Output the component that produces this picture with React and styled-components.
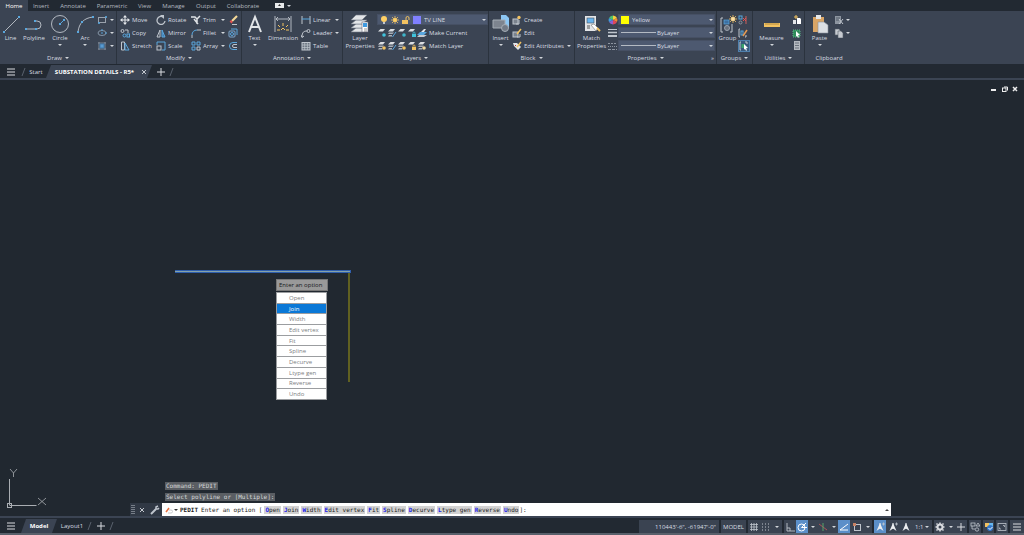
import styled, { createGlobalStyle, css } from "styled-components";

const GlobalStyle = createGlobalStyle`
  * {
    box-sizing: border-box;
  }
  body {
    margin: 0;
    background: #212830;
    font-family: "Open Sans", "Noto Sans", sans-serif;
    font-size: 6px;
    line-height: 8px;
    color: #d9dde2;
  }
  button, select, input {
    font: inherit;
    color: inherit;
    border: 0;
    padding: 0;
    margin: 0;
    background: none;
  }
  ul {
    list-style: none;
    margin: 0;
    padding: 0;
  }
`;

const Page = styled.div`
  height: 100vh;
  display: flex;
  flex-direction: column;
  overflow: hidden;
`;

/* ---------- menu ---------- */

const MenuBar = styled.nav`
  display: flex;
  height: 11px;
  background: #222932;
`;

const MenuTab = styled.button`
  flex: none;
  height: 11px;
  width: ${(p) => p.$w}px;
  color: #b4b9c0;
  white-space: nowrap;
  ${(p) =>
    p.$active &&
    css`
      background: #3b4453;
      color: #fff;
    `}
`;

const MenuExtra = styled.button`
  display: flex;
  align-items: center;
  gap: 3px;
  margin-left: 11px;
`;

/* ---------- ribbon ---------- */

const Ribbon = styled.div`
  display: flex;
  height: 53px;
  flex: none;
  background: #3b4453;
`;

const PanelBox = styled.section`
  flex: none;
  display: flex;
  flex-direction: column;
  border-right: ${(p) => (p.$last ? "0" : "1px solid #2b333e")};
`;

const PanelBody = styled.div`
  display: flex;
  height: 41px;
  padding-top: 2px;
`;

const PanelTitle = styled.button`
  display: flex;
  align-items: center;
  justify-content: center;
  gap: 3px;
  height: 11px;
  position: relative;
`;

const Launcher = styled.span`
  position: absolute;
  right: 2px;
`;

const Big = styled.button`
  width: ${(p) => p.$w}px;
  display: flex;
  flex-direction: column;
  align-items: center;
  white-space: nowrap;
`;

const BigIcon = styled.span`
  height: 21px;
  display: flex;
  align-items: center;
  justify-content: center;
`;

const BigCaret = styled.span`
  height: 5px;
  display: flex;
  align-items: center;
`;

const Col = styled.div`
  width: ${(p) => p.$w}px;
  margin-left: ${(p) => p.$gap || 0}px;
  display: flex;
  flex-direction: column;
`;

const Row = styled.div`
  display: flex;
  align-items: center;
  height: 13px;
`;

const Small = styled.button`
  display: flex;
  align-items: center;
  gap: 2px;
  width: 100%;
  height: 13px;
  text-align: left;
  white-space: nowrap;
`;

const SmallIcon = styled.span`
  flex: none;
  width: 10px;
  height: 11px;
  display: flex;
  align-items: center;
  justify-content: center;
  ${(p) =>
    p.$on &&
    css`
      width: 12px;
      height: 12px;
      background: #3a5a7c;
      border: 1px solid #4f80ad;
    `}
`;

const SmallCaret = styled.span`
  margin-left: auto;
  display: flex;
`;

const LayerTool = styled.button`
  width: 13px;
  height: 13px;
  display: flex;
  align-items: center;
  justify-content: center;
`;

const Combo = styled.label`
  display: flex;
  align-items: center;
  gap: 3px;
  flex: 1;
  height: 11px;
  padding: 0 1px 0 2px;
  background: #4d5970;
  border: 1px solid #465064;
`;

const Select = styled.select`
  appearance: none;
  flex: 1;
  min-width: 0;
  outline: 0;
`;

const Swatch = styled.span`
  width: 8px;
  height: 8px;
  background: ${(p) => p.$color};
`;

const LineSample = styled.span`
  width: 35px;
  height: 1px;
  background: #b4bac3;
  margin-right: -2px;
`;

const Caret = styled.i`
  width: 0;
  height: 0;
  border: 2px solid transparent;
  border-top-color: ${(p) => p.$color || "#d3d7dc"};
  border-bottom: 0;
`;

/* ---------- file and layout tabs ---------- */

const TabStrip = styled.div`
  flex: none;
  display: flex;
  align-items: center;
  height: 14px;
  background: #222932;
`;

const FileTabs = styled(TabStrip)`
  height: 16px;
  padding-top: 1px;
  border-bottom: 2px solid #3b4453;
`;

const Tab = styled.button`
  height: 100%;
  display: flex;
  align-items: center;
  justify-content: center;
  gap: 7px;
  white-space: nowrap;
  width: ${(p) => p.$w}px;
  ${(p) =>
    p.$active &&
    css`
      background: #3b4453;
      color: #fff;
      font-weight: 700;
      clip-path: polygon(5px 0, 100% 0, calc(100% - 5px) 100%, 0 100%);
    `}
`;

const FileTab = styled(Tab)`
  padding-left: 4px;
`;

const IconButton = styled.button`
  display: flex;
  align-items: center;
  justify-content: center;
  height: 13px;
  width: ${(p) => p.$w || 13}px;
  background: ${(p) => (p.$on ? "#5b8fc9" : "none")};
`;

/* ---------- drawing area ---------- */

const Canvas = styled.main`
  flex: 1;
  min-height: 0;
  position: relative;
  display: flex;
  flex-direction: column;
  background: #212830;
`;

const WindowButtons = styled.div`
  display: flex;
  justify-content: flex-end;
  padding: 2px 4px 0 0;
`;

const Drawing = styled.svg`
  position: absolute;
  left: 174px;
  top: 189px;
`;

const Ucs = styled.svg`
  position: absolute;
  left: 5px;
  bottom: 6px;
`;

const Popup = styled.div`
  position: absolute;
  left: 276px;
  top: 199px;
`;

const PopupTitle = styled.div`
  width: 52px;
  height: 12px;
  padding: 1px 2px;
  background: #999;
  border: 1px solid #777;
  color: #16181c;
  white-space: nowrap;
`;

const PopupList = styled.ul`
  display: grid;
  grid-auto-rows: 1fr;
  gap: 1px;
  width: 51px;
  height: 108px;
  margin-top: 1px;
  padding: 1px;
  background: #9b9da0;
`;

const Option = styled.button`
  display: block;
  width: 100%;
  height: 100%;
  padding-left: 12px;
  text-align: left;
  background: ${(p) => (p.$active ? "#0a78d7" : "#fff")};
  color: ${(p) => (p.$active ? "#fff" : "#7c7e82")};
`;

const Console = styled.div`
  margin: auto 133px 0 130px;
  font-family: "DejaVu Sans Mono", "Liberation Mono", monospace;
`;

const History = styled.div`
  display: flex;
  flex-direction: column;
  align-items: flex-start;
  gap: 3px;
  padding: 0 0 2px 35px;

  span {
    background: #5a5e63;
    color: #d5d7d9;
    padding: 0 1px;
  }
`;

const CommandRow = styled.div`
  display: flex;
  align-items: center;
  height: 13px;
  background: #303844;
`;

const CommandLine = styled.div`
  flex: 1;
  display: flex;
  align-items: center;
  height: 13px;
  padding: 0 2px;
  background: #fff;
  color: #222;
  white-space: pre;

  b {
    margin: 0 3px 0 2px;
  }
  input {
    flex: 1;
    min-width: 0;
    outline: 0;
  }
`;

const Keywords = styled.span`
  display: flex;
  gap: 2px;
  margin-left: 2px;
`;

const Keyword = styled.button`
  background: #d2d2d2;
  padding: 0 1px;
  &::first-letter {
    color: #2222ee;
    font-weight: 700;
  }
`;

/* ---------- status bar ---------- */

const StatusBar = styled.footer`
  flex: none;
  display: flex;
  height: 19px;
  padding-top: 1px;
  background: #222932;
  border-top: 2px solid #3b4453;
  border-bottom: 2px solid #59606b;
`;

const StatusTools = styled.div`
  display: flex;
  gap: 2px;
  margin-left: auto;
  padding-top: 1px;
`;

const StatusGroup = styled.div`
  display: flex;
  align-items: center;
  justify-content: ${(p) => (p.$end ? "flex-end" : "center")};
  height: 13px;
  width: ${(p) => (p.$w ? p.$w + "px" : "auto")};
  padding: ${(p) => (p.$end ? "0 3px" : "0")};
  background: #3a4351;
  white-space: nowrap;
`;

/* ---------- icons ---------- */

const W = "#bfc5cd";
const B = "#5aa7de";
const Y = "#f2c261";

function Svg({ s = 10, h, children, ...rest }) {
  return (
    <svg width={s} height={h || s} viewBox={`0 0 ${s} ${h || s}`} fill="none" stroke={W} {...rest}>
      {children}
    </svg>
  );
}

function Dots({ at, r = 1 }) {
  return at.map(([x, y]) => (
    <rect key={x + "-" + y} x={x - r} y={y - r} width={r * 2} height={r * 2} fill={B} stroke="none" />
  ));
}

const LineIcon = () => (
  <Svg s={20}><path d="M3 18 18 3" strokeWidth=".9" /><Dots at={[[3, 18], [18, 3]]} /></Svg>
);
const PolylineIcon = () => (
  <Svg s={20}><path d="M2 15h11a4 4 0 0 0 0-8h-2" strokeWidth=".9" /><Dots at={[[2, 15], [12, 15], [11, 7]]} /></Svg>
);
const CircleIcon = () => (
  <Svg s={20}><circle cx="10" cy="10" r="8.500" strokeWidth=".9" /><path d="m10 10 4-4" stroke={B} /><Dots at={[[10, 10], [14, 6]]} /></Svg>
);
const ArcIcon = () => (
  <Svg s={20}><path d="M3 18C4 9 9 4 18 3" strokeWidth=".9" /><Dots at={[[3, 18], [7, 8], [18, 3]]} /></Svg>
);
const TextIcon = () => (
  <Svg s={16} h={20}><path d="M2 18 8 3l6 15M4 13h8" stroke="#e2e5e8" strokeWidth="2" /></Svg>
);
const DimensionIcon = () => (
  <Svg s={20}>
    <path d="M2 2v16M18 2v16M3 5h14M5 3 3 5l2 2M15 3l2 2-2 2" strokeWidth=".9" />
    <path d="M10 9v3M5 11l2 2M15 11l-2 2M4 16h3M13 16h3M8 16l2-2 2 2" stroke={Y} />
  </Svg>
);
const LayersIcon = () => (
  <Svg s={20}>
    <g fill="#e3e5e8" stroke="#727a86" strokeWidth=".6">
      <path d="m1 18 5-4h11l-5 4z" /><path d="m1 14 5-4h11l-5 4z" /><path d="m1 10 5-4h11l-5 4z" /><path d="m1 6 5-5h11l-5 5z" />
    </g>
    <rect x="12" y="8" width="6" height="10" fill="#fff" stroke="#667" strokeWidth=".6" />
    <rect x="13" y="9" width="4" height="4" fill="#3f9ae0" stroke="none" />
    <path d="M14 15h3M14 17h3" strokeWidth=".6" stroke="#555" />
  </Svg>
);
const InsertIcon = () => (
  <Svg s={18} h={20}>
    <path d="M9 1h5l3 3v10H9z" fill="#8cc6f3" stroke="none" />
    <path d="M1 6h12v8H1z" fill="#7d848f" stroke="#a5acb5" />
    <circle cx="13" cy="14" r="3.500" fill="#727a86" stroke="#a5acb5" />
  </Svg>
);
const MatchIcon = () => (
  <Svg s={18} h={20}>
    <rect x="2" y="2" width="11" height="15" fill="#e3e5e8" stroke="none" />
    <rect x="4" y="4" width="7" height="5" fill="#69b4ee" stroke="#45505e" strokeWidth=".6" />
    <path d="M4 12h3M4 14h3" stroke="#555" />
    <path d="m8 11 3-1 4 4-2 3z" fill="#fff" stroke="#777" strokeWidth=".6" />
    <path d="m14 14 3 3" stroke={Y} strokeWidth="2" />
  </Svg>
);
const GroupIcon = () => (
  <Svg s={18} h={20}>
    <path d="M4 4H2v14h2M11 18h2V10" />
    <rect x="5" y="6" width="5" height="4" fill="#3d6fa0" stroke={B} strokeWidth=".7" />
    <circle cx="8" cy="14" r="2.500" fill="#69717d" stroke="#9aa2ad" />
    <path d="M14 1v8M10 5h8M11 2l6 6M17 2l-6 6" stroke={Y} strokeWidth=".8" />
    <circle cx="14" cy="5" r="2" fill="#ffe0a0" stroke="none" />
  </Svg>
);
const MeasureIcon = () => (
  <Svg s={18}>
    <rect x="1" y="8" width="16" height="4" fill={Y} stroke="none" />
    <path d="M3 8v2M5 8v2M7 8v2M9 8v2M11 8v2M13 8v2M15 8v2" stroke="#8a6a2d" strokeWidth=".6" />
  </Svg>
);
const PasteIcon = () => (
  <Svg s={18} h={20}>
    <rect x="2" y="3" width="11" height="15" fill="#d9a566" stroke="none" />
    <rect x="5" y="1" width="5" height="4" fill="#e6e8ea" stroke="none" />
    <path d="M7 8h6l4 3v8H7z" fill="#dcdfe3" stroke="#8b929c" strokeWidth=".6" />
  </Svg>
);

const RectIcon = () => <Svg><rect x="1.500" y="2.500" width="7" height="5" stroke="#9aa2ad" /><Dots at={[[2, 8], [9, 2]]} r={0.9} /></Svg>;
const EllipseIcon = () => <Svg><ellipse cx="5" cy="5" rx="4" ry="2.500" stroke="#8494a6" /><Dots at={[[5, 5], [9, 5], [5, 2]]} r={0.7} /></Svg>;
const HatchIcon = () => <Svg><path d="M2 1v8M8 1v8M1 2h8M1 8h8" stroke="#8d97a4" strokeWidth=".8" /><rect x="3" y="3" width="4" height="4" fill="#5a9bd0" stroke="#3f78ab" /></Svg>;
const MoveIcon = () => <Svg stroke="#e3e6ea"><path d="M5 1v8M1 5h8" /><path d="M5 0 3 2.500h4zM5 10 3 7.500h4zM0 5l2.500-2v4zM10 5 7.500 3v4z" fill="#e3e6ea" stroke="none" /></Svg>;
const CopyIcon = () => <Svg><circle cx="2.500" cy="3" r="1.500" /><path d="M5 2h3v3" /><circle cx="4.500" cy="7.500" r="1.500" stroke={B} /><rect x="7" y="6" width="2.500" height="3" stroke={B} /></Svg>;
const StretchIcon = () => <Svg><path d="M1.500 9V1h3v8z" /><path d="M5 2l4 7H5z" stroke={B} /></Svg>;
const RotateIcon = () => <Svg><path d="M7 2a4 4 0 1 0 2 4" strokeWidth="1.300" /><path d="M4 0h4v4z" fill={W} stroke="none" /></Svg>;
const MirrorIcon = () => <Svg><path d="M4 2v7H1z" /><path d="M6 2v7h3z" fill="#3f78ab" stroke={B} /></Svg>;
const ScaleIcon = () => <Svg><path d="M1 4V1h8v8H6" stroke={B} /><rect x="1" y="5" width="4" height="4" /></Svg>;
const TrimIcon = () => <Svg stroke="#dfe2e6"><path d="M0 2h4l2 2 3-3M6 4v5M3 4l4 5" strokeWidth="1.500" /></Svg>;
const FilletIcon = () => <Svg><path d="M1 10V7" /><path d="M1 7c0-3 2-5 5-5" stroke={B} /><path d="M6 2h4" /></Svg>;
const ArrayIcon = () => <Svg><path d="M1 1h3v3H1zM6 1h3v3H6zM1 6h3v3H1z" stroke={B} /><path d="M6 6h3v3H6z" /></Svg>;
const EraseIcon = () => <Svg><path d="m9 1-5 5" stroke="#f5d998" strokeWidth="2.200" /><path d="M4 6 2.500 7.500" stroke="#e8504f" strokeWidth="2.500" /><path d="M4 9.500h5" /></Svg>;
const ExplodeIcon = () => <Svg><rect x="1" y="3" width="6" height="6" rx="1" stroke="#7fa8cf" /><path d="M3 1h6v6" stroke={B} /><circle cx="4" cy="6" r="1.500" stroke={B} /></Svg>;
const OffsetIcon = () => <Svg><path d="M9 1.500H5a3.500 3.500 0 0 0 0 7h4" stroke={B} /><path d="M9 3.500H6a1.500 1.500 0 0 0 0 3h3" /></Svg>;
const LinearIcon = () => <Svg><path d="M1 1v8M9 1v8" /><path d="M1 4h8" stroke={B} /></Svg>;
const LeaderIcon = () => <Svg><path d="M1 9c0-5 2-6 5-6" /><circle cx="7.500" cy="3" r="1.500" /><path d="M0 7l1 2.500L3 8" /></Svg>;
const TableIcon = () => <Svg><rect x="1" y="1.500" width="8" height="7.500" fill="#6c7582" /><path d="M1 4h8M1 6.500h8M3.700 2v7M6.400 2v7" strokeWidth=".7" /></Svg>;
const CreateIcon = () => <Svg><rect x="1" y="4" width="5" height="5" fill="#7b838e" /><path d="M7 5v4H4" /><circle cx="7" cy="2.500" r="1.700" fill={Y} stroke="none" /></Svg>;
const EditIcon = () => <Svg><rect x="1" y="4" width="5" height="5" fill="#7b838e" /><path d="M9 1 5 6" stroke={Y} strokeWidth="1.500" /><path d="M8 6v3H5" /></Svg>;
const AttrIcon = () => <Svg><path d="M1 2h4l4 4-3 3-4-4z" fill="#e3e5e8" stroke="none" /><path d="M9 1 5 6" stroke={Y} strokeWidth="1.500" /><path d="m3 4 1 1" stroke="#b33" /></Svg>;
const WheelIcon = () => (
  <Svg stroke="none">
    <path d="M5 5V.5A4.500 4.500 0 0 1 9 3z" fill="#f2d13c" /><path d="M5 5l4-2a4.500 4.500 0 0 1 0 4z" fill="#f08a33" />
    <path d="M5 5l4 2a4.500 4.500 0 0 1-4 2.500z" fill="#e2465b" /><path d="M5 5v4.500A4.500 4.500 0 0 1 1 7z" fill="#8b5fd0" />
    <path d="M5 5 1 7a4.500 4.500 0 0 1 0-4z" fill="#3f9ae0" /><path d="M5 5 1 3A4.500 4.500 0 0 1 5 .5z" fill="#4fc06b" />
  </Svg>
);
const WeightIcon = () => <Svg><path d="M0 1.500h9" /><path d="M0 4.500h9" strokeWidth="1.500" /><path d="M0 8h9" strokeWidth="2" /></Svg>;
const LtypeIcon = () => <Svg stroke="#8d95a1"><path d="M0 2.500h9" strokeDasharray="2 1" /><path d="M0 5.500h9" strokeDasharray="1 1" /><path d="M0 8.500h9" strokeDasharray="3 1" /></Svg>;
const UngroupIcon = () => <Svg><rect x="1" y="1" width="3" height="3" stroke={B} /><circle cx="2.500" cy="7.500" r="1.500" stroke="#8d95a1" /><path d="M8 1v8" stroke="#c9605c" /><path d="m5 3 3 3M8 3 5 6" stroke="#e8504f" /></Svg>;
const GroupEditIcon = () => <Svg><path d="M2 1H1v8h1M7 9h1V7" /><rect x="3" y="3" width="2" height="4" stroke={B} /><path d="M9 2 5 8" stroke="#e89b52" strokeWidth="1.500" /></Svg>;
const GroupSelectIcon = () => <Svg><path d="M2 1H1v8h1M6 1h2v2" /><rect x="2.500" y="3" width="3" height="4" fill="#3aa36b" stroke="none" /><path d="m5 3 4 4-2 .3 1 2-1 .4-1-2-1 1z" fill="#fff" stroke="none" /></Svg>;
const PointIcon = () => <Svg><path d="M1 5h3v4H1z" fill="#e3e5e8" stroke="none" /><path d="M5 3h3l1 1v5H5z" fill="#fff" stroke="none" /><path d="M4 0v4M2 2h4" stroke={Y} /></Svg>;
const QuickSelectIcon = () => <Svg><rect x="1" y="2" width="7" height="7" fill="#2f8a59" stroke="#5cb98a" strokeDasharray="1 1" /><path d="m4 3 4 4-2 .3 1 2-1 .4-1-2-1 1z" fill="#fff" stroke="none" /></Svg>;
const CalcIcon = () => <Svg><rect x="2" y="0" width="6" height="9" fill="#b4b9c0" stroke="none" /><path d="M3 2h4M3 4.500h4M3 7h4" stroke="#565e6a" strokeWidth=".8" /></Svg>;
const CutIcon = () => <Svg><rect x="1" y="1" width="6" height="8" fill="#8d95a0" stroke="none" /><path d="M2 3h4M2 5h3" stroke="#454e5b" strokeWidth=".8" /><path d="m5 4 4 5M9 4 5 9" /></Svg>;
const CopyClipIcon = () => <Svg fill="#c6cad0" stroke="#565e6a" strokeWidth=".6"><path d="M1 1h4l1 1v5H1z" /><path d="M4 3h3l2 2v5H4z" /></Svg>;

/* small sheet with a coloured badge in its lower right corner */
function LayerMini({ tint, square, n }) {
  return (
    <Svg>
      <path d="m1 3.500 2.500-2.500H8L6 3.500z" fill="#dcdfe3" stroke="none" />
      {n && <path d="m1 6 1-1.500h5L5.500 6zM1 8.500 2 7h3v1.500z" fill="#a9afb8" stroke="none" />}
      {square ? (
        <>
          <rect x="5" y="6" width="4" height="3" fill={tint} stroke="none" />
          <path d="M6 6V5a1 1 0 0 1 2 0v1" stroke={tint} strokeWidth=".8" />
        </>
      ) : (
        <circle cx="7" cy="7" r="1.800" fill={tint} stroke="none" />
      )}
    </Svg>
  );
}

function LayerSwap() {
  return (
    <Svg>
      <path d="m1 3.500 2.500-2.500H8L6 3.500z" fill="#dcdfe3" stroke="none" />
      <path d="m1 6 1-1.500h5L5.500 6zM1 8.500 2 7h3v1.500z" fill="#a9afb8" stroke="none" />
      <path d="M9 4 5.500 9" stroke={B} />
    </Svg>
  );
}

const MakeCurrentIcon = () => <Svg><path d="m0 9 2-2h8L7 9z" fill="#c6cad0" stroke="none" /><path d="m0 7 3-3h7L7 7z" fill={B} stroke="none" /><path d="m4 4 3-3h2L7 4z" fill="#e9ebee" stroke="none" /></Svg>;
const BulbIcon = () => <Svg s={8} h={10}><circle cx="4" cy="4" r="3" fill="#ffd066" stroke="none" /><path d="M3 8h2" strokeWidth="2" /></Svg>;
const SunIcon = () => <Svg s={8} h={10}><path d="M4 1v8M0 5h8M1 2l6 6M7 2 1 8" stroke={Y} strokeWidth=".8" /><circle cx="4" cy="5" r="2" fill="#ffd066" stroke="none" /></Svg>;
const LockIcon = () => <Svg s={8} h={10}><rect x="0" y="5" width="6" height="4" fill={Y} stroke="none" /><path d="M4 5V3a1.500 1.500 0 0 1 3 0v2" stroke={Y} /></Svg>;

const BurgerIcon = () => <Svg><path d="M1 2h8M1 5h8M1 8h8" stroke="#d9dce0" /></Svg>;
const PlusIcon = () => <Svg><path d="M5 1v8M1 5h8" stroke="#d9dce0" /></Svg>;
const CloseIcon = () => <Svg s={6}><path d="m1 1 4 4M5 1 1 5" stroke="#c4c8ce" /></Svg>;
const WrenchIcon = () => <Svg><path d="m1 9 5-5" strokeWidth="2" /><path d="M8 1 6 2v2h2l1-1" strokeWidth="1.500" /></Svg>;
const Slash = () => <Svg s={5} h={10} stroke="#59616d"><path d="M4 1 1 9" /></Svg>;

const GridIcon = () => <Svg><path d="M2.500 1v8M5 1v8M7.500 1v8M1 2.500h8M1 5h8M1 7.500h8" strokeWidth=".8" /></Svg>;
const SnapIcon = () => <Svg><path d="M1 2h8M1 5h8M1 8h8" strokeDasharray="1 2" /></Svg>;
const OrthoIcon = () => <Svg><path d="M2 1v8h8M2 6h3v3" strokeWidth=".9" /></Svg>;
const PolarIcon = () => <Svg stroke="#fff"><circle cx="4.500" cy="5.500" r="3.500" /><path d="M9 1 4.500 5.500H10" /></Svg>;
const IsoIcon = () => <Svg><path d="m1 2 8 6" stroke="#b0555a" /><path d="M5 1v8" stroke="#57a36a" /></Svg>;
const TrackIcon = () => <Svg stroke="#fff"><path d="M9 2 1 8h8" /></Svg>;
const OsnapIcon = () => <Svg><rect x="2.500" y="2.500" width="6" height="6" /><rect x="1" y="1" width="3" height="3" fill="#c98263" stroke="none" /></Svg>;
const AnnoIcon = ({ extra }) => <Svg><path d="M5 1 8.500 9 5 6.500 1.500 9z" fill="#eceef0" stroke="none" /><path d="M5 1v6" stroke="#eceef0" />{extra && <path d="M7 2h3M8.500.5v3" strokeWidth=".8" />}</Svg>;
const GearIcon = () => <Svg stroke="#d9dce0"><circle cx="5" cy="5" r="2.500" strokeWidth="2" /><path d="M5 .5v2M5 7.500v2M.5 5h2M7.500 5h2M1.500 1.500l1 1M7.500 7.500l1 1M8.500 1.500l-1 1M1.500 8.500l1-1" strokeWidth="1.500" /></Svg>;
const IsolateIcon = () => <Svg strokeWidth=".8"><rect x="1" y="1" width="4" height="3" /><path d="m6 4 2-3 2 3z" /><circle cx="7" cy="7.500" r="1.700" /><path d="M2 4v3h3" /></Svg>;
const GpuIcon = () => <Svg><rect x="1" y="1" width="4" height="4" fill={Y} stroke="none" /><rect x="5" y="1" width="4" height="4" fill="#67b7ef" stroke="none" /><circle cx="6" cy="6" r="3" fill="#3478c9" stroke="none" /><path d="m4.500 6 1.500 1.500L8.500 5" stroke="#fff" /></Svg>;
const FullIcon = () => <Svg><rect x="1" y="1.500" width="8" height="7" strokeWidth=".8" /><path d="M6 3.500h1.500V5M4 7H2.500V5.500" strokeWidth=".8" /></Svg>;

/* ---------- parts ---------- */

function Panel({ title, more = true, launcher, last, children }) {
  return (
    <PanelBox $last={last}>
      <PanelBody>{children}</PanelBody>
      <PanelTitle>
        {title}
        {more && <Caret />}
        {launcher && <Launcher>»</Launcher>}
      </PanelTitle>
    </PanelBox>
  );
}

function BigTool({ w, icon, lines, caret }) {
  return (
    <Big $w={w}>
      <BigIcon>{icon}</BigIcon>
      {lines.map((l) => (
        <span key={l}>{l}</span>
      ))}
      {caret && <BigCaret><Caret /></BigCaret>}
    </Big>
  );
}

function Tool({ icon, label, name, caret, on }) {
  return (
    <Small aria-label={label ? undefined : name}>
      <SmallIcon $on={on}>{icon}</SmallIcon>
      {label}
      {caret && <SmallCaret><Caret /></SmallCaret>}
    </Small>
  );
}

const menus = [
  ["Home", 28],
  ["Insert", 26],
  ["Annotate", 38],
  ["Parametric", 40],
  ["View", 25],
  ["Manage", 33],
  ["Output", 32],
  ["Collaborate", 42],
];

const options = ["Open", "Join", "Width", "Edit vertex", "Fit", "Spline", "Decurve", "Ltype gen", "Reverse", "Undo"];

export default function App() {
  return (
    <Page>
      <GlobalStyle />
      <MenuBar>
        {menus.map(([m, w]) => (
          <MenuTab key={m} $w={w} $active={m === "Home"}>{m}</MenuTab>
        ))}
        <MenuExtra aria-label="Ribbon display">
          <Svg s={9} h={5}><rect width="9" height="5" fill="#e8eaec" stroke="none" /><path d="m3 3 1.500-2L6 3z" fill="#333" stroke="none" /></Svg>
          <Caret />
        </MenuExtra>
      </MenuBar>

      <Ribbon>
        <Panel title="Draw">
          <BigTool w={21} icon={<LineIcon />} lines={["Line"]} />
          <BigTool w={26} icon={<PolylineIcon />} lines={["Polyline"]} />
          <BigTool w={26} icon={<CircleIcon />} lines={["Circle"]} caret />
          <BigTool w={24} icon={<ArcIcon />} lines={["Arc"]} caret />
          <Col $w={17}>
            <Tool name="Rectangle" icon={<RectIcon />} caret />
            <Tool name="Ellipse" icon={<EllipseIcon />} caret />
            <Tool name="Hatch" icon={<HatchIcon />} caret />
          </Col>
          <Col $w={2} />
        </Panel>

        <Panel title="Modify">
          <Col $w={33} $gap={3}>
            <Tool label="Move" icon={<MoveIcon />} />
            <Tool label="Copy" icon={<CopyIcon />} />
            <Tool label="Stretch" icon={<StretchIcon />} />
          </Col>
          <Col $w={32} $gap={3}>
            <Tool label="Rotate" icon={<RotateIcon />} />
            <Tool label="Mirror" icon={<MirrorIcon />} />
            <Tool label="Scale" icon={<ScaleIcon />} />
          </Col>
          <Col $w={34} $gap={3}>
            <Tool label="Trim" icon={<TrimIcon />} caret />
            <Tool label="Fillet" icon={<FilletIcon />} caret />
            <Tool label="Array" icon={<ArrayIcon />} caret />
          </Col>
          <Col $w={13} $gap={3}>
            <Tool name="Erase" icon={<EraseIcon />} />
            <Tool name="Explode" icon={<ExplodeIcon />} />
            <Tool name="Offset" icon={<OffsetIcon />} />
          </Col>
        </Panel>

        <Panel title="Annotation">
          <BigTool w={25} icon={<TextIcon />} lines={["Text"]} caret />
          <BigTool w={32} icon={<DimensionIcon />} lines={["Dimension"]} />
          <Col $w={38} $gap={2}>
            <Tool label="Linear" icon={<LinearIcon />} caret />
            <Tool label="Leader" icon={<LeaderIcon />} caret />
            <Tool label="Table" icon={<TableIcon />} />
          </Col>
          <Col $w={3} />
        </Panel>

        <Panel title="Layers">
          <BigTool w={34} icon={<LayersIcon />} lines={["Layer", "Properties"]} />
          <Col $w={111}>
            <Row>
              <Combo>
                <BulbIcon />
                <SunIcon />
                <LockIcon />
                <Swatch $color="#8080ff" />
                <Select aria-label="Layer"><option>TV LINE</option></Select>
                <Caret />
              </Combo>
            </Row>
            <Row>
              <LayerTool aria-label="Off"><LayerMini tint="#41c3dc" /></LayerTool>
              <LayerTool aria-label="Isolate"><LayerSwap /></LayerTool>
              <LayerTool aria-label="Freeze"><LayerMini tint="#3fb5c9" /></LayerTool>
              <LayerTool aria-label="Lock"><LayerMini tint="#41c3dc" square /></LayerTool>
              <Tool label="Make Current" icon={<MakeCurrentIcon />} />
            </Row>
            <Row>
              <LayerTool aria-label="Turn all on"><LayerMini tint={Y} n /></LayerTool>
              <LayerTool aria-label="Unisolate"><LayerSwap /></LayerTool>
              <LayerTool aria-label="Thaw all"><LayerMini tint={Y} n /></LayerTool>
              <LayerTool aria-label="Unlock"><LayerMini tint={Y} square /></LayerTool>
              <Tool label="Match Layer" icon={<LayerMini tint="#f0d9a0" n />} />
            </Row>
          </Col>
        </Panel>

        <Panel title="Block">
          <BigTool w={23} icon={<InsertIcon />} lines={["Insert"]} caret />
          <Col $w={59}>
            <Tool label="Create" icon={<CreateIcon />} />
            <Tool label="Edit" icon={<EditIcon />} />
            <Tool label="Edit Attributes" icon={<AttrIcon />} caret />
          </Col>
          <Col $w={3} />
        </Panel>

        <Panel title="Properties" launcher>
          <BigTool w={33} icon={<MatchIcon />} lines={["Match", "Properties"]} />
          <Col $w={107}>
            <Row>
              <SmallIcon><WheelIcon /></SmallIcon>
              <Combo><Swatch $color="#ffff00" /><Select aria-label="Color"><option>Yellow</option></Select><Caret /></Combo>
            </Row>
            <Row>
              <SmallIcon><WeightIcon /></SmallIcon>
              <Combo><LineSample /><Select aria-label="Lineweight"><option>ByLayer</option></Select><Caret /></Combo>
            </Row>
            <Row>
              <SmallIcon><LtypeIcon /></SmallIcon>
              <Combo><LineSample /><Select aria-label="Linetype"><option>ByLayer</option></Select><Caret /></Combo>
            </Row>
          </Col>
          <Col $w={1} />
        </Panel>

        <Panel title="Groups">
          <BigTool w={21} icon={<GroupIcon />} lines={["Group"]} />
          <Col $w={14}>
            <Tool name="Ungroup" icon={<UngroupIcon />} />
            <Tool name="Group Edit" icon={<GroupEditIcon />} />
            <Tool name="Group Selection" icon={<GroupSelectIcon />} on />
          </Col>
        </Panel>

        <Panel title="Utilities">
          <BigTool w={37} icon={<MeasureIcon />} lines={["Measure"]} caret />
          <Col $w={12} $gap={2}>
            <Tool name="ID Point" icon={<PointIcon />} />
            <Tool name="Quick Select" icon={<QuickSelectIcon />} />
            <Tool name="Calculator" icon={<CalcIcon />} />
          </Col>
        </Panel>

        <Panel title="Clipboard" more={false} last>
          <BigTool w={29} icon={<PasteIcon />} lines={["Paste"]} caret />
          <Col $w={16}>
            <Tool name="Cut" icon={<CutIcon />} caret />
            <Tool name="Copy Clip" icon={<CopyClipIcon />} caret />
          </Col>
          <Col $w={3} />
        </Panel>
      </Ribbon>

      <FileTabs>
        <IconButton $w={21} aria-label="Drawings"><BurgerIcon /></IconButton>
        <Slash />
        <Tab $w={20}>Start</Tab>
        <FileTab $w={106} $active>SUBSTATION DETAILS - R5* <CloseIcon /></FileTab>
        <IconButton $w={17} aria-label="New drawing"><PlusIcon /></IconButton>
        <Slash />
      </FileTabs>

      <Canvas>
        <WindowButtons>
          <IconButton $w={10} aria-label="Minimize"><Svg s={6}><path d="M0 4h5" strokeWidth="2" stroke="#eee" /></Svg></IconButton>
          <IconButton $w={11} aria-label="Restore"><Svg s={6}><rect x=".5" y="2" width="3.500" height="3.500" stroke="#eee" /><path d="M2 1h3.500v3.500" stroke="#eee" /></Svg></IconButton>
          <IconButton $w={10} aria-label="Close"><Svg s={6}><path d="m1 1 4 4M5 1 1 5" stroke="#eee" strokeWidth="1.500" /></Svg></IconButton>
        </WindowButtons>

        <Drawing width="178" height="115" viewBox="0 0 178 115">
          <path d="M175 3v110" stroke="#77741c" strokeWidth="1.500" />
          <path d="M1 2.500h176" stroke="#2f5fae" strokeWidth="3" />
          <path d="M1 2.500h175" stroke="#86a2a8" strokeWidth="1" />
        </Drawing>

        <Ucs width="43" height="42" viewBox="0 0 43 42" fill="none" stroke="#a9adb2">
          <path d="M4.500 11v26M4.500 37.500h27" />
          <rect x="2.500" y="35.500" width="4" height="4" />
          <path d="m5 1 3.500 4L12 1M8.500 5v4M33 30l8 7M41 30l-8 7" strokeWidth=".8" />
        </Ucs>

        <Popup>
          <PopupTitle>Enter an option</PopupTitle>
          <PopupList>
            {options.map((o) => (
              <li key={o}><Option $active={o === "Join"}>{o}</Option></li>
            ))}
          </PopupList>
        </Popup>

        <Console>
          <History>
            <span>Command: PEDIT</span>
            <span>Select polyline or [Multiple]:</span>
          </History>
          <CommandRow>
            <IconButton $w={6} aria-label="Move command line">
              <Svg s={4} h={10}><path d="M1 0v10M3 0v10" strokeDasharray="1 1" /></Svg>
            </IconButton>
            <IconButton $w={12} aria-label="Close command line"><CloseIcon /></IconButton>
            <IconButton $w={14} aria-label="Customize"><WrenchIcon /></IconButton>
            <CommandLine>
              <Svg><path d="m2 7 3-4" stroke="#e8703f" strokeWidth="1.500" /><path d="M5 5h2a1 1 0 0 1 0 3H4" stroke="#c9ccd0" /></Svg>
              <Caret $color="#333" />
              <b>PEDIT</b>Enter an option [
              <Keywords>
                {options.map((o) => (
                  <Keyword key={o}>{o}</Keyword>
                ))}
              </Keywords>
              ]:
              <input aria-label="Command" />
              <Svg s={4}><path d="M0 3h4L2 1z" fill="#444" stroke="none" /></Svg>
            </CommandLine>
          </CommandRow>
        </Console>
      </Canvas>

      <StatusBar>
        <TabStrip>
          <IconButton $w={21} aria-label="Layouts"><BurgerIcon /></IconButton>
          <Tab $w={36} $active>Model</Tab>
          <Tab $w={30}>Layout1</Tab>
          <Slash />
          <IconButton $w={17} aria-label="New layout"><PlusIcon /></IconButton>
          <Slash />
        </TabStrip>
        <StatusTools>
          <StatusGroup $w={80} $end>110443'-6", -61947'-0"</StatusGroup>
          <StatusGroup as="button" $w={25}>MODEL</StatusGroup>
          <StatusGroup>
            <IconButton $w={12} aria-label="Grid"><GridIcon /></IconButton>
            <IconButton $w={12} aria-label="Snap"><SnapIcon /></IconButton>
            <IconButton $w={10} aria-label="Snap options"><Caret /></IconButton>
          </StatusGroup>
          <StatusGroup>
            <IconButton $w={12} aria-label="Ortho"><OrthoIcon /></IconButton>
            <IconButton $w={12} $on aria-label="Polar"><PolarIcon /></IconButton>
            <IconButton $w={9} aria-label="Polar options"><Caret /></IconButton>
            <IconButton $w={12} aria-label="Isodraft"><IsoIcon /></IconButton>
            <IconButton $w={9} aria-label="Isodraft options"><Caret /></IconButton>
            <IconButton $w={12} $on aria-label="Tracking"><TrackIcon /></IconButton>
            <IconButton $w={13} aria-label="Object snap"><OsnapIcon /></IconButton>
            <IconButton $w={9} aria-label="Object snap options"><Caret /></IconButton>
          </StatusGroup>
          <StatusGroup>
            <IconButton $w={12} $on aria-label="Annotation visibility"><AnnoIcon extra /></IconButton>
            <IconButton $w={13} aria-label="Auto scale"><AnnoIcon extra /></IconButton>
            <IconButton $w={13} aria-label="Annotation scale"><AnnoIcon /></IconButton>
            <IconButton $w={20}>1:1&nbsp;<Caret /></IconButton>
          </StatusGroup>
          <StatusGroup>
            <IconButton $w={12} aria-label="Workspace"><GearIcon /></IconButton>
            <IconButton $w={9} aria-label="Workspace options"><Caret /></IconButton>
            <IconButton $w={12} aria-label="Annotation monitor"><PlusIcon /></IconButton>
          </StatusGroup>
          <StatusGroup><IconButton $w={12} aria-label="Isolate objects"><IsolateIcon /></IconButton></StatusGroup>
          <StatusGroup><IconButton $w={11} aria-label="Graphics performance"><GpuIcon /></IconButton></StatusGroup>
          <StatusGroup><IconButton $w={12} aria-label="Clean screen"><FullIcon /></IconButton></StatusGroup>
          <StatusGroup><IconButton $w={14} aria-label="Customization"><BurgerIcon /></IconButton></StatusGroup>
        </StatusTools>
      </StatusBar>
    </Page>
  );
}
